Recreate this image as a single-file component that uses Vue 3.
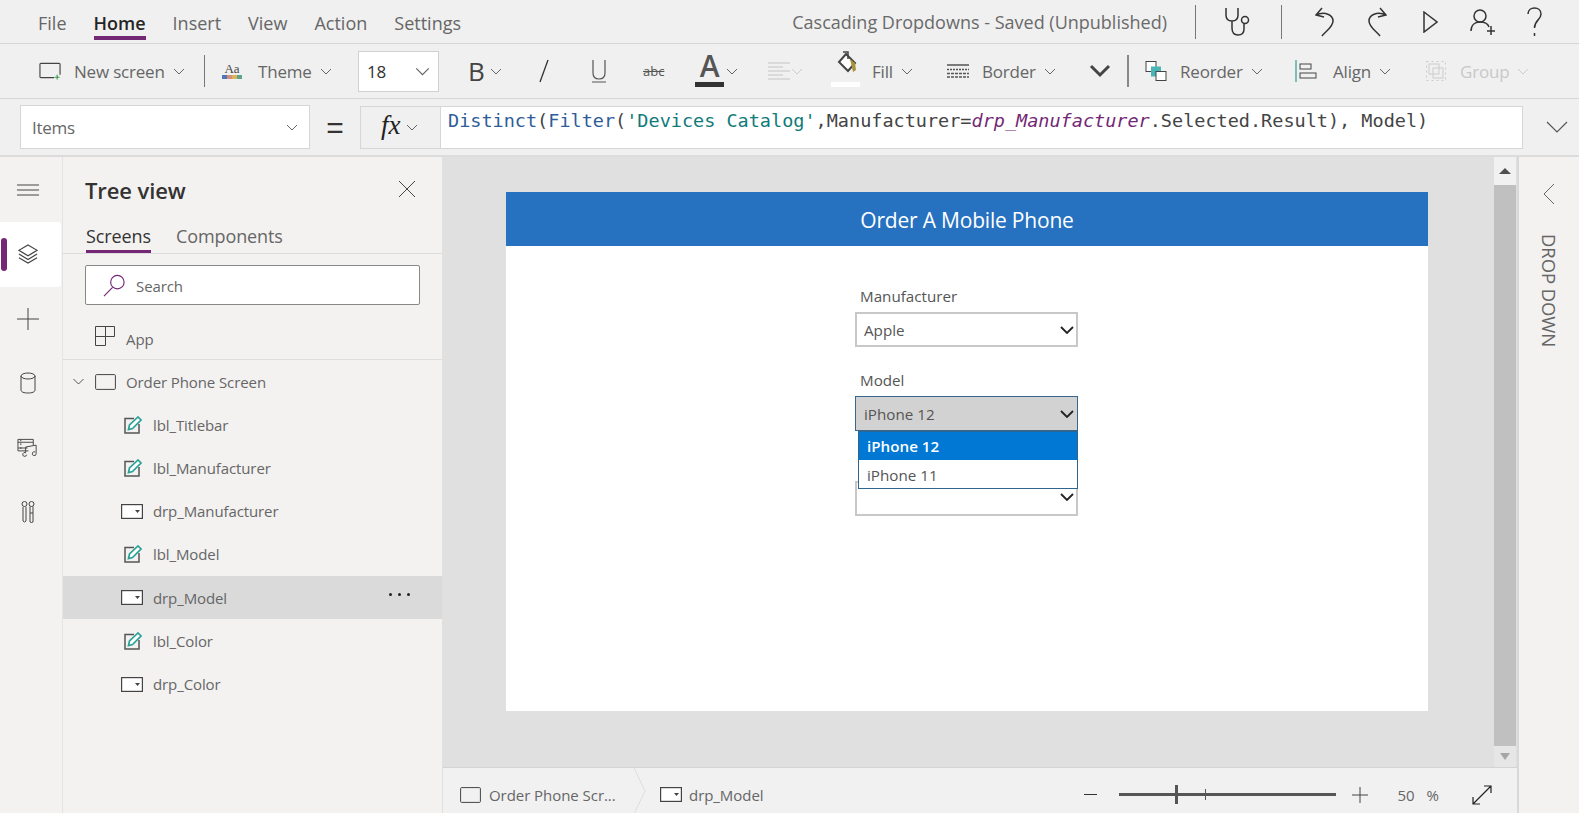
<template>
  <div class="studio">
    <svg class="defs" aria-hidden="true">
      <symbol id="chev" viewBox="0 0 12 7"><path d="M1 1l5 5 5-5" /></symbol>
      <symbol id="editIcon" viewBox="0 0 18 18">
        <path d="M10 2.500H1v14.500h14V8" fill="none" stroke="#555" stroke-width="1.500" />
        <path d="M4.500 13.500l1-4.500L14 1l3 3-8.500 8.500z" fill="#fff" stroke="#2aa198" stroke-width="1.700" />
      </symbol>
      <symbol id="dropIcon" viewBox="0 0 22 15">
        <rect x=".6" y=".6" width="20.800" height="13.800" fill="#fff" stroke="#444" stroke-width="1.200" />
        <path d="M14 6h5l-2.500 3z" fill="#444" />
      </symbol>
    </svg>

    <header class="menuBar">
      <nav class="tabs">
        <span v-for="t in tabs" :key="t" class="tab" :class="{ active: t === 'Home' }">{{ t }}</span>
      </nav>
      <div class="title">Cascading Dropdowns - Saved (Unpublished)</div>
      <div class="vsep titleSep"></div>
      <svg class="stetho" viewBox="0 0 26 30"><path d="M1 1v7q0 6 6 6t6-6V1M7 14v7q0 7 6 7t6-6v-5" /><circle cx="20" cy="13" r="3.500" /></svg>
      <div class="vsep stethoSep"></div>
      <svg class="undo" viewBox="0 0 19 30"><path d="M7 1L1 8l8 2M1 8C10 4 18 8 18 14c0 6-7 10-11 15" /></svg>
      <svg class="redo" viewBox="0 0 19 30"><path d="M12 1l6 7-8 2M18 8C9 4 1 8 1 14c0 6 7 10 11 15" /></svg>
      <svg class="play" viewBox="0 0 15 22"><path d="M1 1l13 10L1 21z" /></svg>
      <svg class="person" viewBox="0 0 25 28"><circle cx="10" cy="8" r="6" /><path d="M1 23c0-6 4-9 9-9s8 2 9 5M21 18v9M17 23h8" /></svg>
      <svg class="help" viewBox="0 0 15 30"><path d="M1 7c0-4 3-6 6.500-6S14 3 14 7c0 6-6.500 6-6.500 14M7.500 26v3" /></svg>
    </header>

    <section class="toolbar">
      <div class="tool newScreen">
        <svg class="ico22" viewBox="0 0 23 18"><path d="M16 16H2a1 1 0 0 1-1-1V2a1 1 0 0 1 1-1h19a1 1 0 0 1 1 1v11" fill="none" stroke="#444" stroke-width="1.200" /><path d="M19 13v5M16.500 15.500h5" stroke="#3a9a4b" stroke-width="1.200" /></svg>
        <span>New screen</span>
        <svg class="chev"><use href="#chev" /></svg>
      </div>
      <div class="vsep toolSep"></div>
      <div class="tool theme">
        <div class="themeIco"><span>Aa</span><i></i></div>
        <span>Theme</span>
        <svg class="chev"><use href="#chev" /></svg>
      </div>
      <div class="sizeBox"><span>18</span><svg class="chev"><use href="#chev" /></svg></div>
      <div class="tool bold"><b>B</b><svg class="chev"><use href="#chev" /></svg></div>
      <svg class="italic" viewBox="0 0 10 24"><path d="M9 1L1 23" /></svg>
      <svg class="underline" viewBox="0 0 14 24"><path d="M1 1v13q0 6 6 6t6-6V1M0 23h14" /></svg>
      <span class="strike">abc</span>
      <div class="fontColor"><div class="swatch dark"><b>A</b></div><svg class="chev"><use href="#chev" /></svg></div>
      <div class="alignText">
        <svg viewBox="0 0 22 18"><path d="M0 1h22M0 5h15M0 9h22M0 13h15M0 17h22" /></svg>
        <svg class="chev"><use href="#chev" /></svg>
      </div>
      <div class="tool fill">
        <div class="swatch light">
          <svg viewBox="0 0 22 24"><path d="M10 3l9 9-7 8-9-9z" fill="#fff" stroke="#444" stroke-width="2" /><path d="M7 1h5v7" fill="none" stroke="#444" stroke-width="1.500" /><path d="M14 8l5 4 1 7-3 2z" fill="#a89438" /></svg>
        </div>
        <span>Fill</span>
        <svg class="chev"><use href="#chev" /></svg>
      </div>
      <div class="tool border">
        <svg class="ico22" viewBox="0 0 22 15"><path d="M0 1.500h22" stroke="#555" stroke-width="1.500" /><path d="M0 6h22" stroke="#555" stroke-width="1.500" stroke-dasharray="2 1" /><path d="M0 10h22M0 13.500h22" stroke="#555" stroke-width="1.500" stroke-dasharray="3 1" /></svg>
        <span>Border</span>
        <svg class="chev"><use href="#chev" /></svg>
      </div>
      <svg class="more" viewBox="0 0 22 14"><path d="M2 2l9 9 9-9" /></svg>
      <div class="vsep moreSep"></div>
      <div class="tool reorder">
        <svg class="ico22" viewBox="0 0 22 21"><rect x="1" y="1" width="10" height="10" fill="#fff" stroke="#444" /><rect x="6" y="6" width="10" height="10" fill="#49b5b5" /><rect x="11" y="11" width="10" height="9" fill="#fff" stroke="#444" /></svg>
        <span>Reorder</span>
        <svg class="chev"><use href="#chev" /></svg>
      </div>
      <div class="tool alignTool">
        <svg class="ico22" viewBox="0 0 22 22"><path d="M1 0v22" stroke="#2a9d97" stroke-width="1.200" /><rect x="5" y="4" width="11" height="5" fill="none" stroke="#444" /><rect x="5" y="13" width="16" height="5" fill="none" stroke="#444" /></svg>
        <span>Align</span>
        <svg class="chev"><use href="#chev" /></svg>
      </div>
      <div class="tool group off">
        <svg class="ico22" viewBox="0 0 22 22"><rect x="1.500" y="1.500" width="19" height="19" fill="none" stroke="#ccc" stroke-dasharray="2 3" /><rect x="4" y="4" width="10" height="10" fill="none" stroke="#ccc" /><rect x="8" y="8" width="10" height="10" fill="none" stroke="#ccc" /></svg>
        <span>Group</span>
        <svg class="chev"><use href="#chev" /></svg>
      </div>
    </section>

    <section class="formulaBar">
      <div class="propBox"><span>Items</span><svg class="chev"><use href="#chev" /></svg></div>
      <div class="equals">=</div>
      <div class="fxBox"><em>fx</em><svg class="chev"><use href="#chev" /></svg></div>
      <div class="formula"><span class="fn">Distinct</span>(<span class="fn">Filter</span>(<span class="str">'Devices Catalog'</span>,Manufacturer=<span class="ref">drp_Manufacturer</span>.Selected.Result), Model)</div>
      <svg class="expandFormula"><use href="#chev" /></svg>
    </section>

    <main class="body">
      <aside class="rail">
        <div class="railBtn menu">
          <svg viewBox="0 0 22 12"><path d="M0 1h22M0 6h22M0 11h22" /></svg>
        </div>
        <div class="railBtn current">
          <svg viewBox="0 0 22 22"><path d="M11 1l10 6-10 6L1 7z" /><path d="M1 11l10 6 10-6M1 15l10 6 10-6" /></svg>
        </div>
        <div class="railBtn">
          <svg viewBox="0 0 22 22"><path d="M11 0v22M0 11h22" /></svg>
        </div>
        <div class="railBtn">
          <svg viewBox="0 0 16 22"><ellipse cx="8" cy="4" rx="7" ry="3" /><path d="M1 4v14c0 2 3 3 7 3s7-1 7-3V4" /></svg>
        </div>
        <div class="railBtn">
          <svg viewBox="0 0 23 20"><path d="M12 13H1V1h16v6M1 4h16M1 10h10" stroke-dasharray="none" /><path d="M4 1v12" stroke-dasharray="2 2" /><path d="M10 17a2 2 0 1 1-1-2V9l11-2v9a2 2 0 1 1-1-1.800" /></svg>
        </div>
        <div class="railBtn tools">
          <svg viewBox="0 0 14 22"><circle cx="3.500" cy="3" r="2.500" /><circle cx="10.500" cy="3" r="2.500" /><path d="M2 6v14q1.500 2 3 0V6M9 5.500V21q1.500 1 3 0V5.500M9 12h3" /></svg>
        </div>
      </aside>

      <aside class="tree">
        <div class="treeHead">
          <h2>Tree view</h2>
          <svg class="close" viewBox="0 0 18 18"><path d="M1 1l16 16M17 1L1 17" /></svg>
        </div>
        <div class="treeTabs">
          <span class="on">Screens</span>
          <span>Components</span>
        </div>
        <div class="search">
          <svg viewBox="0 0 24 24"><circle cx="15" cy="8.500" r="7" /><path d="M10 14L1 23" /></svg>
          <span>Search</span>
        </div>
        <div class="appRow">
          <svg viewBox="0 0 20 20"><path d="M.5.500h19v10h-9v9h-10zM.5 10.500h10M10.500.500v10" /></svg>
          <span>App</span>
        </div>
        <div class="screenRow">
          <svg class="twist"><use href="#chev" /></svg>
          <svg class="screenIco" viewBox="0 0 21 16"><rect x=".6" y=".6" width="19.800" height="14.800" rx="1" /></svg>
          <span>Order Phone Screen</span>
        </div>
        <div v-for="row in rows" :key="row.name" class="treeRow" :class="{ picked: row.picked }">
          <div class="rowIco">
            <svg v-if="row.kind === 'label'" class="editIco"><use href="#editIcon" /></svg>
            <svg v-else class="dropIco"><use href="#dropIcon" /></svg>
          </div>
          <span>{{ row.name }}</span>
          <div v-if="row.picked" class="dots"><i></i><i></i><i></i></div>
        </div>
      </aside>

      <div class="workspace">
        <div class="canvasArea">
          <div class="canvas">
            <div class="phone">
              <div class="phoneTitle">Order A Mobile Phone</div>
              <div class="form">
                <label>Manufacturer</label>
                <div class="drop"><span>Apple</span><svg viewBox="0 0 14 8"><path d="M1 1l6 6 6-6" /></svg></div>
                <label class="second">Model</label>
                <div class="drop open">
                  <span>iPhone 12</span><svg viewBox="0 0 14 8"><path d="M1 1l6 6 6-6" /></svg>
                  <ul class="list">
                    <li class="sel">iPhone 12</li>
                    <li>iPhone 11</li>
                  </ul>
                </div>
                <div class="drop third"><svg viewBox="0 0 14 8"><path d="M1 1l6 6 6-6" /></svg></div>
              </div>
            </div>
          </div>
          <div class="scroll">
            <div class="arrow"><i class="up"></i></div>
            <div class="thumb"></div>
            <div class="arrow low"><i class="down"></i></div>
          </div>
        </div>
        <footer class="status">
          <div class="crumb first">
            <svg class="screenIco" viewBox="0 0 21 16"><rect x=".6" y=".6" width="19.800" height="14.800" rx="1" /></svg>
            <span>Order Phone Scr...</span>
          </div>
          <svg class="crumbArrow" viewBox="0 0 12 46"><path d="M0 0l11 23L0 46" /></svg>
          <div class="crumb">
            <svg class="dropIco"><use href="#dropIcon" /></svg>
            <span>drp_Model</span>
          </div>
          <div class="zoomMinus"></div>
          <div class="slider"><i class="knob"></i><i class="tick"></i></div>
          <svg class="zoomPlus" viewBox="0 0 16 16"><path d="M8 0v16M0 8h16" /></svg>
          <span class="pct">50</span>
          <span class="pctSign">%</span>
          <svg class="fit" viewBox="0 0 20 20"><path d="M1 19L19 1M12 1h7v7M1 12v7h7" /></svg>
        </footer>
      </div>

      <aside class="props">
        <svg viewBox="0 0 12 22"><path d="M11 1L1 11l10 10" /></svg>
        <span>DROP DOWN</span>
      </aside>
    </main>
  </div>
</template>

<script setup>
const tabs = ['File', 'Home', 'Insert', 'View', 'Action', 'Settings']

const rows = [
  { name: 'lbl_Titlebar', kind: 'label' },
  { name: 'lbl_Manufacturer', kind: 'label' },
  { name: 'drp_Manufacturer', kind: 'drop' },
  { name: 'lbl_Model', kind: 'label' },
  { name: 'drp_Model', kind: 'drop', picked: true },
  { name: 'lbl_Color', kind: 'label' },
  { name: 'drp_Color', kind: 'drop' }
]
</script>

<style>
html, body { margin: 0; padding: 0; background: #f0f0f0; overflow: hidden; }
</style>

<style scoped>
* { box-sizing: border-box; }

.studio {
  width: 1579px;
  height: 813px;
  display: flex;
  flex-direction: column;
  font-family: "Open Sans", "Noto Sans", sans-serif;
  color: #666;
  background: #f0f0f0;
  overflow: hidden;
}
.defs { position: absolute; width: 0; height: 0; }

.chev { width: 12px; height: 7px; fill: none; stroke: #666; stroke-width: 1; flex: none; }
.vsep { width: 1px; background: #777; flex: none; }
.ico22 { width: 22px; height: 22px; flex: none; }

/* top menu */
.menuBar {
  height: 44px;
  flex: none;
  display: flex;
  align-items: center;
  padding-left: 38px;
  border-bottom: 1px solid #d6d6d6;
}
.menuBar > svg { fill: none; stroke: #333; stroke-width: 1.500; flex: none; }
.tabs { display: flex; gap: 27px; align-self: flex-start; }
.tab {
  height: 40px;
  padding-top: 10px;
  line-height: 26px;
  font-size: 18px;
  border-bottom: 4px solid transparent;
}
.tab.active { color: #252525; font-weight: 600; border-color: #742774; }
.title { margin-left: auto; font-size: 18px; color: #6a6a6a; }
.titleSep { height: 34px; margin-left: 28px; }
.stetho { width: 26px; height: 30px; margin-left: 29px; }
.stethoSep { height: 34px; margin-left: 30px; }
.undo { width: 19px; height: 30px; margin-left: 33px; }
.redo { width: 19px; height: 30px; margin-left: 34px; }
.play { width: 15px; height: 22px; margin-left: 36px; }
.person { width: 25px; height: 28px; margin-left: 32px; }
.help { width: 15px; height: 30px; margin-left: 32px; margin-right: 37px; }

/* ribbon */
.toolbar {
  height: 55px;
  flex: none;
  display: flex;
  align-items: center;
  padding-left: 39px;
  border-bottom: 1px solid #d8d8d8;
  font-size: 17px;
  letter-spacing: -.2px;
}
.tool { display: flex; align-items: center; gap: 8px; flex: none; }
.tool > svg.ico22 { margin-right: 5px; }
.newScreen { width: 165px; }
.toolSep { height: 32px; }
.theme { width: 136px; margin-left: 17px; }
.themeIco { width: 20px; margin-right: 8px; line-height: 12px; text-align: center; }
.themeIco span { display: block; font-family: "Liberation Serif", serif; font-size: 13px; letter-spacing: 0; color: #444; }
.themeIco i { display: block; height: 4px; background: linear-gradient(to right, #4d78b8 25%, #d88f78 25% 50%, #d8b45e 50% 75%, #5ea58c 75%); }
.sizeBox {
  width: 81px;
  height: 41px;
  display: flex;
  align-items: center;
  justify-content: space-between;
  padding: 0 8px;
  background: #fff;
  border: 1px solid #d0d0d0;
  font-size: 17px;
  color: #333;
}
.sizeBox .chev { width: 15px; height: 9px; }
.bold { width: 62px; margin-left: 29px; gap: 5px; }
.bold b { font-size: 26px; font-weight: 400; color: #444; }
.italic { width: 10px; height: 24px; fill: none; stroke: #333; stroke-width: 1.300; margin-left: 9px; flex: none; }
.underline { width: 14px; height: 24px; fill: none; stroke: #555; stroke-width: 1.200; margin-left: 43px; flex: none; }
.strike { width: 24px; margin-left: 37px; font-size: 13px; letter-spacing: 0; text-decoration: line-through; color: #555; flex: none; }
.fontColor { display: flex; align-items: center; margin-left: 28px; gap: 2px; flex: none; }
.swatch { width: 29px; height: 36px; margin-bottom: 4px; border-bottom: 5px solid #333; text-align: center; }
.swatch.dark b { font-size: 30px; line-height: 30px; font-weight: 600; color: #555; display: block; }
.swatch.light { border-color: #fff; padding-left: 3px; }
.swatch.light svg { width: 22px; height: 24px; }
.alignText { display: flex; align-items: center; margin-left: 30px; width: 63px; flex: none; }
.alignText svg:first-child { width: 22px; height: 18px; fill: none; stroke: #c4c4c4; stroke-width: 1; }
.alignText .chev { stroke: #ccc; margin-left: 1px; }
.fill { width: 116px; gap: 8px; }
.fill .swatch { margin-right: 4px; }
.border { width: 142px; gap: 8px; }
.more { width: 22px; height: 14px; fill: none; stroke: #444; stroke-width: 3; flex: none; }
.moreSep { width: 2px; height: 32px; background: #888; margin-left: 16px; }
.reorder { width: 150px; margin-left: 16px; }
.alignTool { width: 130px; }
.tool.alignTool > svg.ico22 { margin-right: 8px; }
.off { color: #c8c8c8; }
.off .chev { stroke: #ccc; }

/* formula */
.formulaBar {
  height: 58px;
  flex: none;
  display: flex;
  align-items: center;
  padding-left: 20px;
  border-bottom: 2px solid #dcdcdc;
}
.propBox {
  width: 290px;
  height: 44px;
  display: flex;
  align-items: center;
  justify-content: space-between;
  padding: 0 11px;
  background: #fff;
  border: 1px solid #d6d6d6;
  font-size: 17px;
  letter-spacing: -.3px;
}
.equals { width: 50px; text-align: center; font-size: 30px; line-height: 30px; padding-top: 2px; color: #333; font-family: "Liberation Sans", sans-serif; }
.fxBox {
  width: 81px;
  height: 43px;
  display: flex;
  align-items: center;
  gap: 5px;
  padding-left: 20px;
  border: 1px solid #d6d6d6;
}
.fxBox em { font-family: "Liberation Serif", serif; font-size: 27px; margin-bottom: 4px; color: #222; }
.formula {
  width: 1082px;
  height: 43px;
  padding: 2px 0 0 7px;
  background: #fff;
  border: 1px solid #d6d6d6;
  border-left: 0;
  font-family: "DejaVu Sans Mono", monospace;
  font-size: 18.500px;
  line-height: 24px;
  color: #444;
  white-space: pre;
}
.fn { color: #2e5d99; }
.str { color: #0f7b7b; }
.ref { color: #742774; font-style: italic; }
.expandFormula { width: 24px; height: 14px; margin-left: 22px; fill: none; stroke: #555; stroke-width: .6; }

/* main */
.body { flex: 1; min-height: 0; display: flex; }
.rail {
  width: 63px;
  flex: none;
  background: #f3f2f1;
  border-right: 1px solid #e4e4e4;
}
.railBtn {
  height: 64.500px;
  padding-right: 5px;
  margin-right: 1px;
  display: flex;
  align-items: center;
  justify-content: center;
  position: relative;
}
.railBtn.menu { height: 65px; }
.railBtn svg { width: 22px; height: 22px; fill: none; stroke: #444; stroke-width: 1; }
.railBtn.menu svg { height: 12px; }
.railBtn.tools svg { width: 16px; }
.railBtn.current { background: #fff; border-radius: 0 3px 3px 0; }
.railBtn.current svg { width: 20px; height: 20px; stroke-width: 1.300; }
.railBtn.current::before {
  content: "";
  position: absolute;
  left: 1px;
  top: 16px;
  width: 6px;
  height: 33px;
  border-radius: 3px;
  background: #742774;
}

.tree {
  width: 380px;
  flex: none;
  background: #f3f2f1;
  border-right: 1px solid #e0e0e0;
  font-size: 15px;
  letter-spacing: -.1px;
}
.treeHead {
  height: 64px;
  display: flex;
  align-items: center;
  justify-content: space-between;
  padding: 6px 26px 4px 22px;
}
.treeHead h2 { margin: 0; font-size: 22px; font-weight: 600; letter-spacing: -.1px; color: #333; }
.close { width: 18px; height: 18px; fill: none; stroke: #444; stroke-width: 1; margin-top: -2px; }
.treeTabs {
  height: 33px;
  display: flex;
  gap: 25px;
  padding-left: 23px;
  border-bottom: 1px solid #ddd;
  font-size: 18px;
}
.treeTabs span { height: 32px; line-height: 31px; }
.treeTabs .on { color: #333; border-bottom: 3px solid #742774; font-weight: 500; }
.search {
  height: 40px;
  margin: 11px 22px 0;
  display: flex;
  align-items: center;
  gap: 10px;
  padding-left: 17px;
  background: #fff;
  border: 1px solid #888;
  border-radius: 2px;
}
.search span { padding-top: 2px; }
.search svg { width: 23px; height: 23px; fill: none; stroke: #742774; stroke-width: 1.200; }
.appRow {
  height: 55px;
  display: flex;
  align-items: center;
  gap: 11px;
  padding: 8px 0 0 32px;
  border-bottom: 1px solid #ddd;
}
.appRow span { padding-top: 5px; }
.appRow svg { width: 20px; height: 20px; fill: none; stroke: #444; }
.screenRow { height: 43px; display: flex; align-items: center; padding-left: 9px; }
.twist { width: 13px; height: 7px; fill: none; stroke: #555; margin-right: 10px; }
.screenIco { width: 21px; height: 16px; fill: none; stroke: #444; flex: none; margin-right: 10px; }
.treeRow { height: 43.250px; display: flex; align-items: center; position: relative; }
.treeRow.picked { background: #dadada; }
.rowIco { width: 90px; padding-left: 58px; display: flex; align-items: center; }
.editIco { width: 18px; height: 18px; margin-left: 3px; }
.dropIco { width: 22px; height: 15px; flex: none; }
.dots { position: absolute; right: 32px; top: 17px; display: flex; gap: 6px; }
.dots i { width: 3px; height: 3px; background: #222; border-radius: 50%; }

/* canvas */
.workspace { flex: 1; min-width: 0; display: flex; flex-direction: column; }
.canvasArea { height: 611px; flex: none; display: flex; background: #e0e0e0; border-bottom: 1px solid #d4d4d4; }
.canvas { flex: 1; padding: 35px 0 0 63px; }
.phone { width: 922px; height: 519px; background: #fff; }
.phoneTitle {
  height: 54px;
  line-height: 56px;
  text-align: center;
  background: #2672c0;
  color: #fff;
  font-size: 21px;
  letter-spacing: -.2px;
}
.form { width: 223px; margin-left: 349px; padding-top: 39px; font-size: 15.200px; color: #555; }
.form label { display: block; height: 22px; line-height: 22px; margin-bottom: 5px; padding-left: 5px; }
.form label.second { margin-top: 22px; }
.drop {
  height: 35px;
  display: flex;
  align-items: center;
  justify-content: space-between;
  padding: 0 2px 0 7px;
  background: #fff;
  border: 2px solid #c8c8c8;
  position: relative;
}
.drop svg { width: 14px; height: 8px; fill: none; stroke: #222; stroke-width: 1.800; margin-left: auto; flex: none; }
.drop.open { background: #d2d2d2; border-color: #37678f; border-width: 1px; padding: 0 3px 0 8px; }
.drop.third { margin-top: 50px; padding-bottom: 3px; }
.list {
  position: absolute;
  z-index: 2;
  left: 2px;
  top: 34px;
  width: 220px;
  margin: 0;
  padding: 0;
  list-style: none;
  background: #fff;
  border: 1px solid #2f6690;
}
.list li { height: 28px; line-height: 28px; padding-left: 8px; }
.list li + li { line-height: 30px; }
.list li.sel { background: #0078d4; color: #fff; font-weight: 600; }

.scroll { width: 22px; flex: none; margin-right: 1px; display: flex; flex-direction: column; background: #eee; }
.arrow { height: 28px; display: flex; align-items: center; justify-content: center; background: #f1f1f1; flex: none; }
.arrow.low { height: 21px; background: #e6e6e6; }
.up { border: 6px solid transparent; border-top: 0; border-bottom: 6px solid #505050; }
.down { border: 5px solid transparent; border-bottom: 0; border-top: 7px solid #a6a6a6; }
.thumb { flex: 1; background: #c0c0c0; }

.status {
  flex: 1;
  display: flex;
  align-items: center;
  padding-top: 7px;
  background: #f1f1f1;
  font-size: 15px;
  letter-spacing: -.05px;
}
.crumb { display: flex; align-items: center; flex: none; }
.crumb.first { width: 191px; padding-left: 17px; }
.crumb .screenIco { margin-right: 8px; }
.crumb .dropIco { margin-right: 7px; }
.crumbArrow { width: 12px; height: 46px; margin-top: -7px; fill: none; stroke: #ddd; flex: none; }
.status .crumb:not(.first) { margin-left: 14px; }
.zoomMinus { width: 13px; height: 1px; margin-left: 320px; background: #333; }
.slider { width: 217px; height: 3px; margin-left: 22px; background: #555; position: relative; }
.slider i { position: absolute; background: #555; }
.knob { left: 56px; top: -8px; width: 3px; height: 19px; }
.tick { left: 86px; top: -4px; width: 1px; height: 11px; }
.zoomPlus { width: 16px; height: 16px; margin-left: 16px; fill: none; stroke: #444; flex: none; }
.pct { margin-left: 30px; }
.pctSign { margin-left: 12px; }
.fit { width: 20px; height: 20px; margin-left: 33px; fill: none; stroke: #222; stroke-width: 1.200; flex: none; }

.props {
  width: 62px;
  flex: none;
  display: flex;
  flex-direction: column;
  align-items: center;
  padding-top: 26px;
  background: #f3f2f1;
  border-left: 2px solid #d8d8d8;
}
.props svg { width: 12px; height: 22px; fill: none; stroke: #666; stroke-width: 1; }
.props span { margin-top: 29px; writing-mode: vertical-rl; font-size: 18.500px; letter-spacing: -.1px; color: #666; }
</style>
